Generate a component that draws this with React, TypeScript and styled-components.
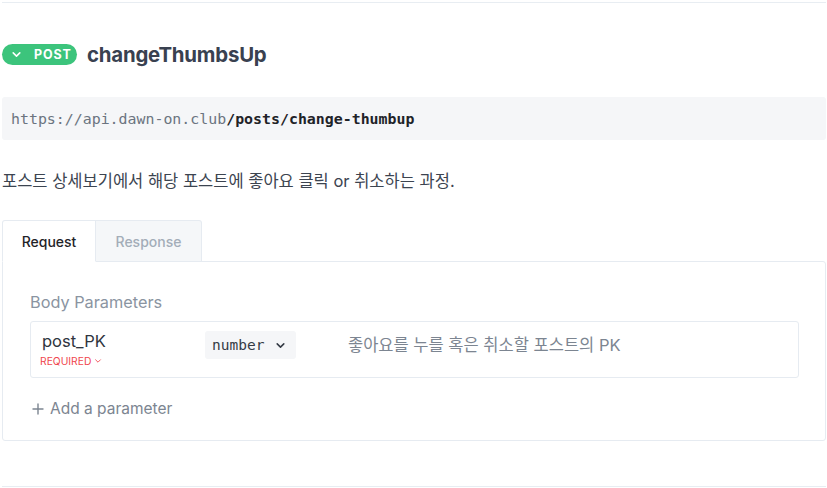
import React from "react";
import styled, { createGlobalStyle } from "styled-components";

const GlobalStyle = createGlobalStyle`
  html, body {
    margin: 0;
    padding: 0;
    background: #ffffff;
  }
  body {
    font-family: Inter, "Noto Sans CJK KR", "Liberation Sans", sans-serif;
    color: #3b4151;
  }
`;

const Page = styled.div`
  width: 827px;
  box-sizing: border-box;
  padding: 0 1px 0 2px;
`;

const TopRule = styled.div`
  height: 2px;
  border-bottom: 1px solid #e8edf2;
`;

const Header = styled.div`
  display: flex;
  align-items: center;
  gap: 10px;
  margin-top: 40px;
  height: 22px;
`;

const MethodBadge = styled.span<{ $color: string }>`
  display: inline-flex;
  align-items: center;
  gap: 12px;
  width: 75px;
  box-sizing: border-box;
  height: 21px;
  padding: 0 0 0 9px;
  border-radius: 11px;
  background: ${(p) => p.$color};
  color: #ffffff;
  font-size: 12.5px;
  font-weight: 700;
  letter-spacing: 0.9px;
`;

const Title = styled.h1`
  margin: 0;
  font-size: 20.4px;
  font-weight: 700;
  color: #394150;
  letter-spacing: -0.2px;
`;

const UrlBox = styled.div`
  margin-top: 32px;
  height: 43px;
  display: flex;
  align-items: center;
  padding: 0 9px;
  background: #f5f6f8;
  border-radius: 3px;
  font-family: "DejaVu Sans Mono", "Liberation Mono", monospace;
  font-size: 14.9px;
`;

const UrlBase = styled.span`
  color: #6b7480;
`;

const UrlPath = styled.span`
  color: #1f2328;
  font-weight: 700;
`;

const Description = styled.p`
  margin: 30px 0 0;
  font-size: 16.5px;
  color: #3c4450;
  line-height: 22px;
`;

const Tabs = styled.div`
  display: flex;
  margin-top: 28px;
`;

const Tab = styled.div<{ $active?: boolean }>`
  height: 42px;
  box-sizing: border-box;
  display: flex;
  align-items: center;
  justify-content: center;
  width: ${(p) => (p.$active ? 94 : 106)}px;
  font-size: 14px;
  font-weight: 500;
  border: 1px solid #e6ebf1;
  border-bottom: ${(p) => (p.$active ? "1px solid #ffffff" : "1px solid #e6ebf1")};
  border-left: ${(p) => (p.$active ? "1px solid #e6ebf1" : "none")};
  border-radius: ${(p) => (p.$active ? "3px 0 0 0" : "0 3px 0 0")};
  background: ${(p) => (p.$active ? "#ffffff" : "#f5f7f9")};
  color: ${(p) => (p.$active ? "#1f2328" : "#a3adb8")};
  margin-bottom: -1px;
  position: relative;
  z-index: 1;
`;

const Panel = styled.div`
  border: 1px solid #e6ebf1;
  border-radius: 0 3px 3px 3px;
  height: 180px;
  box-sizing: border-box;
  padding: 29px 26px 0 27px;
`;

const SectionLabel = styled.div`
  font-size: 16.3px;
  color: #8a94a1;
  line-height: 22px;
`;

const ParamRow = styled.div`
  margin-top: 8px;
  width: 769px;
  height: 57px;
  box-sizing: border-box;
  border: 1px solid #e6ebf1;
  border-radius: 3px;
  display: flex;
  align-items: flex-start;
  padding: 9px 0 0 9px;
`;

const ParamName = styled.div`
  width: 165px;
  display: flex;
  flex-direction: column;
`;

const NameText = styled.span`
  font-size: 16.5px;
  color: #2f3540;
  padding-left: 2px;
  line-height: 20px;
`;

const Required = styled.span`
  display: flex;
  align-items: center;
  gap: 3px;
  font-size: 10.3px;
  color: #f0474e;
  line-height: 12px;
  margin-top: 4px;
`;

const TypeSelect = styled.div`
  width: 91px;
  height: 28px;
  box-sizing: border-box;
  display: flex;
  align-items: center;
  gap: 11px;
  padding: 0 0 0 7px;
  background: #f5f6f8;
  border-radius: 3px;
  font-family: "DejaVu Sans Mono", "Liberation Mono", monospace;
  font-size: 14.5px;
  color: #353b45;
`;

const ParamDesc = styled.span`
  margin-left: 52px;
  font-size: 16.5px;
  line-height: 28px;
  color: #7c8591;
`;

const AddParam = styled.div`
  margin-top: 21px;
  display: flex;
  align-items: center;
  gap: 6px;
  margin-left: 2px;
  font-size: 15.5px;
  color: #7c8591;
`;

const BottomRule = styled.div`
  margin-top: 45px;
  border-top: 1px solid #e8edf2;
`;

function Chevron({ size, color, width = 1.6 }: { size: number; color: string; width?: number }) {
  return (
    <svg width={size} height={size} viewBox="0 0 10 10" fill="none">
      <path d="M2 3.5 L5 6.5 L8 3.5" stroke={color} strokeWidth={width} strokeLinecap="round" strokeLinejoin="round" />
    </svg>
  );
}

export default function App() {
  return (
    <>
      <GlobalStyle />
      <Page>
        <TopRule />
        <Header>
          <MethodBadge $color="#3cc47c">
            <Chevron size={11} color="#ffffff" width={1.4} />
            POST
          </MethodBadge>
          <Title>changeThumbsUp</Title>
        </Header>
        <UrlBox>
          <UrlBase>https://api.dawn-on.club</UrlBase>
          <UrlPath>/posts/change-thumbup</UrlPath>
        </UrlBox>
        <Description>포스트 상세보기에서 해당 포스트에 좋아요 클릭 or 취소하는 과정.</Description>
        <Tabs>
          <Tab $active>Request</Tab>
          <Tab>Response</Tab>
        </Tabs>
        <Panel>
          <SectionLabel>Body Parameters</SectionLabel>
          <ParamRow>
            <ParamName>
              <NameText>post_PK</NameText>
              <Required>
                REQUIRED
                <Chevron size={8} color="#f0474e" width={1.1} />
              </Required>
            </ParamName>
            <TypeSelect>
              number
              <Chevron size={11} color="#353b45" width={1.4} />
            </TypeSelect>
            <ParamDesc>좋아요를 누를 혹은 취소할 포스트의 PK</ParamDesc>
          </ParamRow>
          <AddParam>
            <svg width="12" height="12" viewBox="0 0 12 12" fill="none">
              <path d="M6 1 V11 M1 6 H11" stroke="#7c8591" strokeWidth="1.4" strokeLinecap="round" />
            </svg>
            Add a parameter
          </AddParam>
        </Panel>
        <BottomRule />
      </Page>
    </>
  );
}
